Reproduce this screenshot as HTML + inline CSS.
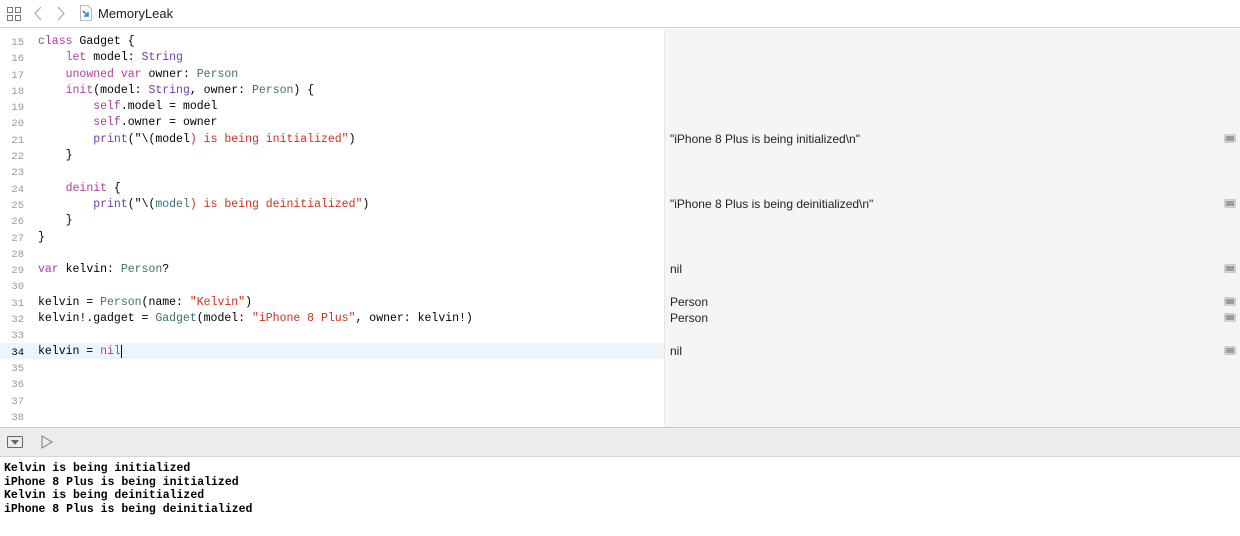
<!DOCTYPE html>
<html><head><style>
*{margin:0;padding:0;box-sizing:border-box}
body{width:1240px;height:536px;overflow:hidden;background:#fff;font-family:"Liberation Sans",sans-serif;position:relative}
#top{position:absolute;left:0;top:0;width:1240px;height:28px;background:#fff;border-bottom:1px solid #cfcfcf}
#top .t{position:absolute;left:98px;top:6px;font-size:13px;color:#222}
#res{position:absolute;left:664px;top:29px;width:576px;height:398px;background:#f5f5f5;border-left:1px solid #e6e6e6}
.code{position:absolute;font-family:"Liberation Mono",monospace;font-size:11.5px;white-space:pre;color:#000}
.ln{position:absolute;left:0;width:24px;text-align:right;font-family:"Liberation Mono",monospace;font-size:10.5px;color:#999}
.k{color:#ad3da4}.ty{color:#703daa}.p{color:#3f6e74}.s{color:#d12f1b}
.r{position:absolute;left:670px;font-size:12px;color:#222}
.b{position:absolute;left:1224px;width:12px;height:9px;border:1px solid #c8c8c8;background:#9c9c9c;border-radius:2px;box-shadow:inset 0 0 0 1px #d8d8d8}
#bar{position:absolute;left:0;top:427px;width:1240px;height:30px;background:#ececec;border-top:1px solid #c8c8c8;border-bottom:1px solid #d5d5d5}
#con{position:absolute;left:4px;top:462px;font-family:"Liberation Mono",monospace;font-weight:bold;font-size:11.5px;line-height:13.5px;white-space:pre;color:#000}
</style></head><body>
<div id="top">
<svg style="position:absolute;left:7px;top:7px" width="14" height="14" viewBox="0 0 14 14" fill="none" stroke="#777" stroke-width="1"><rect x="0.5" y="0.5" width="5" height="5"/><rect x="8.5" y="0.5" width="5" height="5"/><rect x="0.5" y="8.5" width="5" height="5"/><rect x="8.5" y="8.5" width="5" height="5"/></svg>
<svg style="position:absolute;left:33px;top:6px" width="10" height="15" viewBox="0 0 10 15" fill="none" stroke="#aaa" stroke-width="1.2"><path d="M8 1L2 7.5L8 14"/></svg>
<svg style="position:absolute;left:56px;top:6px" width="10" height="15" viewBox="0 0 10 15" fill="none" stroke="#aaa" stroke-width="1.2"><path d="M2 1L8 7.5L2 14"/></svg>
<svg style="position:absolute;left:80px;top:5px" width="12" height="16" viewBox="0 0 12 16"><path d="M0.5 0.5H8L11.5 4V15.5H0.5Z" fill="#fff" stroke="#bbb"/><path d="M3 6L8 11M8 7V11H4" stroke="#2a8de0" stroke-width="1.6" fill="none"/></svg>
<span class="t">MemoryLeak</span>
</div>
<div style="position:absolute;left:0;top:343px;width:664px;height:16px;background:#ecf5fe"></div>
<div id="res"></div>
<div class="ln" style="top:35px;line-height:16.3px">15<br>16<br>17<br>18<br>19<br>20<br>21<br>22<br>23<br>24<br>25<br>26<br>27<br>28<br>29<br>30<br>31<br>32<br>33<br><span style="color:#000">34</span><br>35<br>36<br>37<br>38</div>
<div class="code" style="left:38px;top:34px;line-height:16.3px"><span class="k">class</span> Gadget {
    <span class="k">let</span> model: <span class="ty">String</span>
    <span class="k">unowned</span> <span class="k">var</span> owner: <span class="p">Person</span>
    <span class="k">init</span>(model: <span class="ty">String</span>, owner: <span class="p">Person</span>) {
        <span class="k">self</span>.model = model
        <span class="k">self</span>.owner = owner
        <span class="ty">print</span>("\(model<span class="s">) is being initialized"</span>)
    }

    <span class="k">deinit</span> {
        <span class="ty">print</span>("\(<span class="p">model</span><span class="s">) is being deinitialized"</span>)
    }
}

<span class="k">var</span> kelvin: <span class="p">Person</span>?

kelvin = <span class="p">Person</span>(name: <span class="s">"Kelvin"</span>)
kelvin!.gadget = <span class="p">Gadget</span>(model: <span class="s">"iPhone 8 Plus"</span>, owner: kelvin!)

kelvin = <span class="k">nil</span><span style="border-left:1px solid #000"></span>
</div>
<div class="r" style="top:132px">"iPhone 8 Plus is being initialized\n"</div>
<div class="r" style="top:197px">"iPhone 8 Plus is being deinitialized\n"</div>
<div class="r" style="top:262px">nil</div>
<div class="r" style="top:295px">Person</div>
<div class="r" style="top:311px">Person</div>
<div class="r" style="top:344px">nil</div>
<div class="b" style="top:134px"></div><div class="b" style="top:199px"></div><div class="b" style="top:264px"></div><div class="b" style="top:297px"></div><div class="b" style="top:313px"></div><div class="b" style="top:346px"></div>
<div id="bar">
<svg style="position:absolute;left:7px;top:8px" width="16" height="12" viewBox="0 0 16 12" fill="none" stroke="#666"><rect x="0.5" y="0.5" width="15" height="11" rx="1"/><path d="M5 4.5H11L8 8Z" fill="#666"/></svg>
<svg style="position:absolute;left:41px;top:7px" width="12" height="14" viewBox="0 0 12 14" fill="none" stroke="#777"><path d="M1 1L11 7L1 13Z"/></svg>
</div>
<div id="con">Kelvin is being initialized
iPhone 8 Plus is being initialized
Kelvin is being deinitialized
iPhone 8 Plus is being deinitialized</div>
</body></html>
